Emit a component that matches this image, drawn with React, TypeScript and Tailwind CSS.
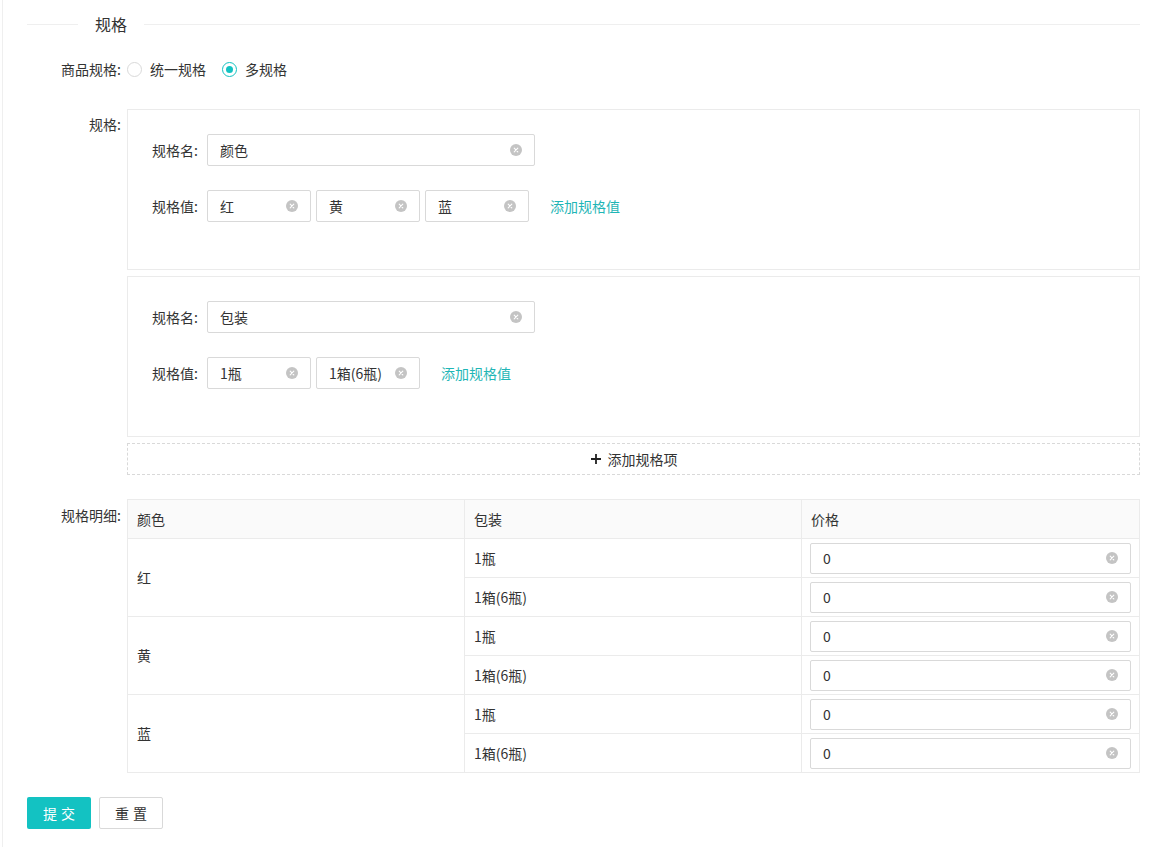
import React from 'react'

const font = { fontFamily: '"Noto Sans CJK SC", "Noto Sans", sans-serif' }

function ClearIcon() {
  return (
    <svg width="12" height="12" viewBox="0 0 12 12" className="shrink-0">
      <circle cx="6" cy="6" r="6" fill="#c4c4c4" />
      <path d="M4.2 4.2 L7.8 7.8 M7.8 4.2 L4.2 7.8" stroke="#fff" strokeWidth="1.1" strokeLinecap="round" />
    </svg>
  )
}

function Input({ value, className }: { value: string; className: string }) {
  return (
    <div className={`flex items-center justify-between border border-[#d9d9d9] rounded-[2px] bg-white pl-[12px] pr-[12px] text-[14px] text-[#333] ${className}`}>
      <span>{value}</span>
      <ClearIcon />
    </div>
  )
}

function SpecCard({ name, values }: { name: string; values: string[] }) {
  return (
    <div className="border border-[#ebebeb] h-[161px] pt-[24px] pl-[24px]">
      <div className="flex items-center h-[32px]">
        <span className="w-[55px] text-[14px] text-[#333]">规格名:</span>
        <Input value={name} className="w-[328px] h-[32px]" />
      </div>
      <div className="flex items-center h-[32px] mt-[24px]">
        <span className="w-[55px] text-[14px] text-[#333]">规格值:</span>
        <div className="flex gap-[5px]">
          {values.map((v) => (
            <Input key={v} value={v} className="w-[104px] h-[32px]" />
          ))}
        </div>
        <span className="ml-[21px] text-[14px] text-[#1fb6b6]">添加规格值</span>
      </div>
    </div>
  )
}

export default function App() {
  const colors = ['红', '黄', '蓝']
  const packs = ['1瓶', '1箱(6瓶)']

  return (
    <div className="min-h-screen bg-white" style={font}>
      <div className="ml-[2px] border-l border-[#efefef] min-h-[847px] pr-[23px]">
        {/* 分割标题 */}
        <div className="flex items-center pt-[12px] h-[36px] pl-[24px]">
          <div className="w-[51px] h-px bg-[#efefef]" />
          <span className="px-[17px] text-[16px] text-[#333] leading-none">规格</span>
          <div className="flex-1 h-px bg-[#efefef]" />
        </div>

        {/* 商品规格 */}
        <div className="flex items-center mt-[18px] h-[30px]">
          <span className="w-[124px] pr-[6px] text-right text-[14px] text-[#333]">商品规格:</span>
          <label className="flex items-center gap-[8px] text-[14px] text-[#333]">
            <span className="w-[15px] h-[15px] rounded-full border border-[#d9d9d9] bg-white" />
            统一规格
          </label>
          <label className="flex items-center gap-[8px] ml-[16px] text-[14px] text-[#333]">
            <span className="w-[15px] h-[15px] rounded-full border border-[#13c2c2] flex items-center justify-center">
              <span className="w-[7px] h-[7px] rounded-full bg-[#13c2c2]" />
            </span>
            多规格
          </label>
        </div>

        {/* 规格 */}
        <div className="flex mt-[25px]">
          <span className="w-[124px] pr-[6px] text-right text-[14px] text-[#333] pt-[5px]">规格:</span>
          <div className="flex-1 flex flex-col gap-[6px]">
            <SpecCard name="颜色" values={['红', '黄', '蓝']} />
            <SpecCard name="包装" values={['1瓶', '1箱(6瓶)']} />
            <div className="h-[32px] border border-dashed border-[#d9d9d9] flex items-center justify-center gap-[6px] text-[14px] text-[#333]">
              <svg width="12" height="12" viewBox="0 0 12 12">
                <path d="M6 1 V11 M1 6 H11" stroke="#222" strokeWidth="1.8" />
              </svg>
              添加规格项
            </div>
          </div>
        </div>

        {/* 规格明细 */}
        <div className="flex mt-[24px]">
          <span className="w-[124px] pr-[6px] text-right text-[14px] text-[#333] pt-[6px]">规格明细:</span>
          <div className="flex-1 border border-[#ebebeb] text-[14px] text-[#333]">
            <div className="grid grid-cols-3 h-[39px] bg-[#fafafa] border-b border-[#ebebeb]">
              <div className="flex items-center pl-[9px] border-r border-[#ebebeb]">颜色</div>
              <div className="flex items-center pl-[9px] border-r border-[#ebebeb]">包装</div>
              <div className="flex items-center pl-[9px]">价格</div>
            </div>
            {colors.map((c, ci) => (
              <div key={c} className={`grid grid-cols-3 ${ci < colors.length - 1 ? 'border-b border-[#ebebeb]' : ''}`}>
                <div className="flex items-center pl-[9px] border-r border-[#ebebeb]">{c}</div>
                <div className="col-span-2">
                  {packs.map((p, pi) => (
                    <div key={p} className={`grid grid-cols-2 ${pi === 0 ? 'h-[39px] border-b border-[#ebebeb]' : 'h-[38px]'}`}>
                      <div className="flex items-center pl-[9px] border-r border-[#ebebeb]">{p}</div>
                      <div className="flex items-center px-[8px]">
                        <Input value="0" className="w-full h-[31px]" />
                      </div>
                    </div>
                  ))}
                </div>
              </div>
            ))}
          </div>
        </div>

        {/* 按钮 */}
        <div className="flex gap-[8px] pl-[24px] mt-[24px]">
          <button className="w-[64px] h-[32px] rounded-[2px] bg-[#13c2c2] text-white text-[14px] tracking-[4px] pl-[4px]">提交</button>
          <button className="w-[64px] h-[32px] rounded-[2px] border border-[#d9d9d9] bg-white text-[#333] text-[14px] tracking-[4px] pl-[4px]">重置</button>
        </div>
      </div>
    </div>
  )
}
